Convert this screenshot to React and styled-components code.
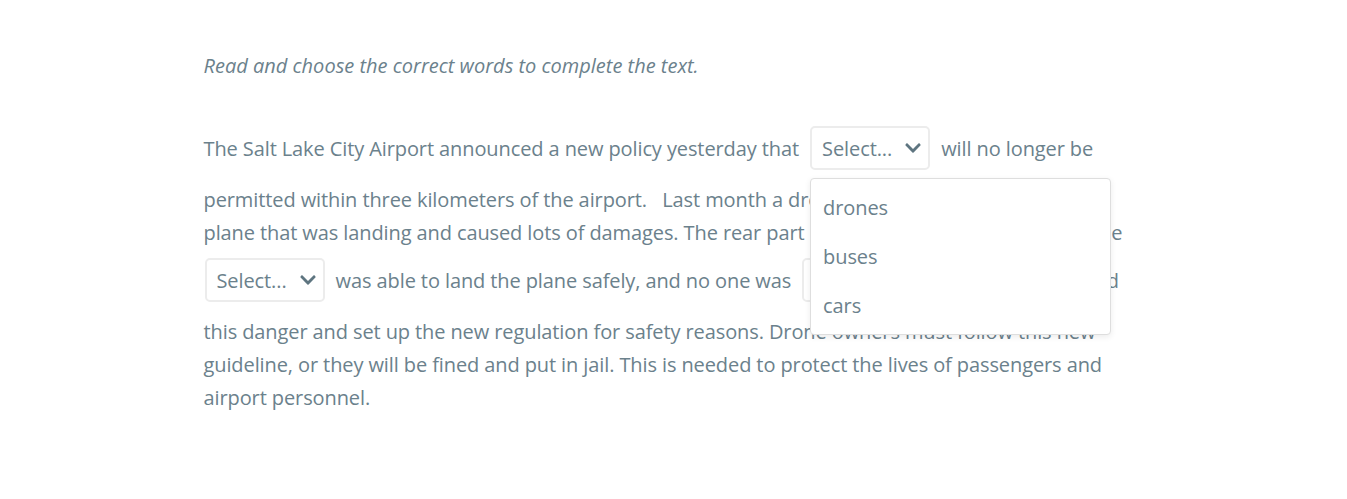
import styled, { createGlobalStyle } from "styled-components";
import { FaChevronDown } from "react-icons/fa";

const GlobalStyle = createGlobalStyle`
    body {
        margin: 0;
        background: #ffffff;
        font-family: "Open Sans", "Noto Sans", sans-serif;
    }
`;

const Page = styled.div`
    max-width: 940px;
    margin: 0 auto;
    padding-top: 49px;
    color: #6b818c;
    font-size: 20px;
    line-height: 33px;
`;

const Instruction = styled.p`
    margin: 0 0 35px;
    font-style: italic;
`;

const Passage = styled.p`
    margin: 0;
    letter-spacing: -0.1px;
`;

const SelectWrap = styled.span`
    position: relative;
    display: inline-block;
    vertical-align: baseline;
    margin: 9px 6px 13px ${(p) => (p.$start ? "1px" : "6px")};
`;

const SelectBox = styled.span`
    display: inline-flex;
    align-items: center;
    justify-content: space-between;
    box-sizing: border-box;
    width: 120px;
    height: 44px;
    padding: 0 6px 0 10px;
    border: 2px solid #ececec;
    border-radius: 5px;
    background: #ffffff;
    color: #6b818c;
    cursor: pointer;
    svg {
        color: #5e7580;
        font-size: 18px;
    }
`;

const Menu = styled.ul`
    position: absolute;
    top: 52px;
    left: 0;
    z-index: 5;
    width: 301px;
    box-sizing: border-box;
    margin: 0;
    padding: 4px 0;
    list-style: none;
    background: #ffffff;
    border: 1px solid #dedede;
    border-radius: 4px;
    box-shadow: 0 2px 6px rgba(0, 0, 0, 0.08);
`;

const Option = styled.li`
    height: 49px;
    line-height: 49px;
    padding: 0 12px;
    cursor: pointer;
`;

function Select({ open, start, options }) {
    return (
        <SelectWrap $start={start}>
            <SelectBox>
                Select...
                <FaChevronDown />
            </SelectBox>
            {open && (
                <Menu>
                    {options.map((o) => (
                        <Option key={o}>{o}</Option>
                    ))}
                </Menu>
            )}
        </SelectWrap>
    );
}

export default function App() {
    return (
        <>
            <GlobalStyle />
            <Page>
                <Instruction>Read and choose the correct words to complete the text.</Instruction>
                <Passage>
                    The Salt Lake City Airport announced a new policy yesterday that{" "}
                    <Select open options={["drones", "buses", "cars"]} />{" "}
                    will no longer be permitted within three kilometers of the airport.&nbsp;&nbsp; Last
                    month a drone collided with the wing of a plane that was landing and caused lots of
                    damages. The rear part of the plane was badly hit, but the{" "}
                    <Select start options={["pilot", "driver", "captain"]} />{" "}
                    was able to land the plane safely, and no one was{" "}
                    <Select options={["hurt", "killed", "lost"]} />. The airport realized this
                    danger and set up the new regulation for safety reasons. Drone owners must follow
                    this new guideline, or they will be fined and put in jail. This is needed to protect
                    the lives of passengers and airport personnel.
                </Passage>
            </Page>
        </>
    );
}
